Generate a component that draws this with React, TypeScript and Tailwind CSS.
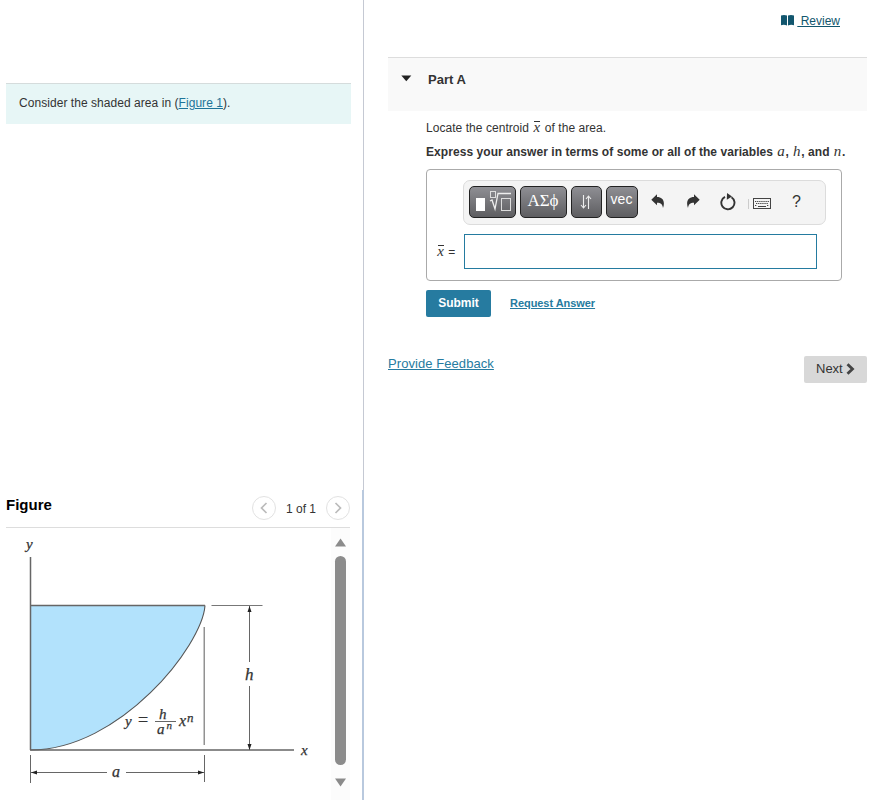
import type { ReactNode } from 'react';

function MathVar({ children }: { children: ReactNode }) {
  return (
    <span className="inline-block w-[9px] text-center font-['Liberation_Serif',serif] text-[15px] leading-none font-normal tracking-normal italic">
      {children}
    </span>
  );
}

function XBar() {
  return (
    <span className="relative inline-block">
      <MathVar>x</MathVar>
      <span className="absolute top-[2px] left-[2px] h-px w-[6px] bg-[#333]" />
    </span>
  );
}

function ToolButton({ className, children }: { className: string; children: ReactNode }) {
  return (
    <button
      className={`flex h-8 shrink-0 items-center justify-center rounded-[5px] border border-[#222] bg-linear-to-b from-[#8f8f94] to-[#5e5e61] text-white ${className}`}
    >
      {children}
    </button>
  );
}

function Toolbar() {
  return (
    <div className="ml-9 flex h-[45px] w-[363px] items-start rounded-[7px] border border-[#dcdcdc] bg-[#f4f4f4] pt-[5px] pl-[5px] text-[#333]">
      <ToolButton className="w-[47px]">
        <svg width="36" height="22" viewBox="0 0 36 22" fill="none">
          <rect x="1" y="7" width="9" height="13" fill="#fff" />
          <rect x="15.500" y="0.500" width="5" height="6" stroke="#ddd" />
          <path d="M15 10l2-1 3 9 3-15.500h13" stroke="#eee" strokeWidth="1.300" />
          <rect x="26.500" y="7.500" width="9" height="12" stroke="#ddd" />
        </svg>
      </ToolButton>
      <ToolButton className="ml-1 w-[47px] pr-px pb-[3px] font-['Liberation_Serif',serif] text-[17px]">
        ΑΣϕ
      </ToolButton>
      <ToolButton className="ml-1 w-[31px] pr-px">
        <svg width="12" height="14" viewBox="0 0 12 14" fill="none" stroke="#eee" strokeWidth="1.100">
          <path d="M3.500 0v13M1 10l2.500 3L6 10M8.500 14V1M6 4l2.500-3L11 4" />
        </svg>
      </ToolButton>
      <ToolButton className="ml-1 w-8 pr-px pb-[5px] text-[14px]">vec</ToolButton>
      <svg className="mt-2 ml-[13px]" width="14" height="15" viewBox="0 0 14 15" fill="#333">
        <path d="M0.300 5.700L6 0.300V3C11.500 3 14.500 7 12 14C11.500 10.500 10 8.700 6 8.700V11.300Z" />
      </svg>
      <svg className="mt-2 ml-[21px]" width="14" height="15" viewBox="0 0 14 15" fill="#333">
        <path d="M13.700 5.700L8 0.300V3C2.500 3-0.500 7 2 14C2.500 10.500 4 8.700 8 8.700V11.300Z" />
      </svg>
      <svg className="mt-[7px] ml-[20px]" width="16" height="18" viewBox="0 0 16 18" fill="none">
        <path d="M5 3.800A6.600 6.600 0 1 0 11.500 4.200" stroke="#333" strokeWidth="1.900" />
        <path d="M7 0l5 3.600L6.800 6.800z" fill="#333" />
      </svg>
      <svg className="mt-[11px] ml-[12px]" width="24" height="14" viewBox="0 0 24 14" fill="none">
        <path d="M0.500 2v10" stroke="#ccc" />
        <rect x="5.500" y="1.500" width="17" height="10" stroke="#444" />
        <path d="M7 4.500h14M8 6.500h12M7 8.500h2M19 8.500h2" stroke="#444" strokeDasharray="1.300 0.800" />
        <path d="M10 9.500h8" stroke="#444" />
      </svg>
      <span className="mt-[6px] ml-[20px] text-[16px] leading-5">?</span>
    </div>
  );
}

function FigureDrawing() {
  return (
    <svg
      width="325"
      height="272"
      viewBox="6 528 325 272"
      fill="none"
      stroke="#666"
      strokeWidth="1.500"
      className="font-['Liberation_Serif',serif] text-[15px] italic"
    >
      <path d="M30.500 605.500H205C202 646 120 750 30.500 750Z" fill="#b2e2fc" stroke="none" />
      <path d="M205 605.500C202 646 120 750 30.500 750" strokeWidth="1.100" stroke="#555" />
      <path d="M30.500 557V750M30 605.500H205M30 750H294" />
      <path d="M211.500 605.500H262.500M204.200 627V745" strokeWidth="1.200" stroke="#777" />
      <path d="M249.500 606V662M249.500 686V750M30.500 755V783M204.500 755V782M31 772.500H107M126 772.500H204" strokeWidth="1" />
      <path
        d="M249.500 606l-2 6h4zM249.500 750l-2-6h4zM31 772.500l6-2v4zM204 772.500l-6-2v4z"
        fill="#222"
        stroke="none"
      />
      <path d="M155 721.500H176" strokeWidth="1" />
      <g fill="#333" stroke="#333" strokeWidth="0.250">
        <text x="26" y="549">y</text>
        <text x="301" y="755">x</text>
        <text x="245" y="680" fontSize="17">h</text>
        <text x="112" y="777" fontSize="16">a</text>
        <text x="125" y="726">y</text>
        <text x="138" y="726" fontSize="18" fontStyle="normal">=</text>
        <text x="159" y="719">h</text>
        <text x="157" y="734">a</text>
        <text x="166.500" y="729" fontSize="11">n</text>
        <text x="179" y="726" fontSize="16">x</text>
        <text x="187" y="722" fontSize="13">n</text>
      </g>
    </svg>
  );
}

function PagerButton({ path }: { path: string }) {
  return (
    <button className="flex h-6 w-6 items-center justify-center rounded-full border border-[#e2e2e2]">
      <svg width="8" height="12" viewBox="0 0 8 12" fill="none" stroke="#bbb" strokeWidth="1.700">
        <path d={path} />
      </svg>
    </button>
  );
}

function LeftPanel() {
  return (
    <div className="flex w-[364px] shrink-0">
      <div className="flex grow flex-col pt-[83px] pl-[6px]">
        <div className="h-[41px] w-[345px] border-t border-[#d5dcdc] bg-[#e7f6f6] pt-[10px] pl-[13px] leading-[18px] tracking-[0.05px]">
          Consider the shaded area in (<a className="text-[#1e7499] underline">Figure 1</a>).
        </div>
        <div className="mt-[366px] flex h-[38px] w-[344px] items-start border-b border-[#ddd] text-black">
          <h2 className="grow text-[15px] leading-[30px] font-bold">Figure</h2>
          <div className="flex items-center pt-[6px] text-[#333]">
            <PagerButton path="M6.500 1L1.500 6l5 5" />
            <span className="w-[50px] pt-[2px] text-center">1 of 1</span>
            <PagerButton path="M1.500 1l5 5-5 5" />
          </div>
        </div>
        <div className="flex">
          <FigureDrawing />
          <div className="flex h-[272px] w-[19px] flex-col items-center bg-[#fcfcfc]">
            <svg className="mt-[10px]" width="12" height="9" viewBox="0 0 12 9" fill="#8b8b8b">
              <path d="M5.500 0.500L11 8.500H0z" />
            </svg>
            <div className="mt-[9px] h-[209px] w-[11px] rounded-full bg-[#8b8b8b]" />
            <svg className="mt-[13px]" width="12" height="9" viewBox="0 0 12 9" fill="#8b8b8b">
              <path d="M5.500 8.500L11 0.500H0z" />
            </svg>
          </div>
        </div>
      </div>
      <div className="flex w-[2px] flex-col items-end">
        <div className="h-[490px] w-px bg-[#c5c9d3]" />
        <div className="w-[2px] grow bg-[#b9c9de]" />
      </div>
    </div>
  );
}

function RightPanel() {
  return (
    <div className="flex grow flex-col pr-[5px] pl-6">
      <div className="flex h-[57px] justify-end pt-3 pr-[27px] text-[#12566e]">
        <svg className="mt-[3px]" width="13" height="11" viewBox="0 0 13 11" fill="#12566e">
          <path d="M0 0.500Q3 -0.300 6 0.500V10.500Q3 9 0 10.200zM7 0.500Q10 -0.300 13 0.500V10.200Q10 9 7 10.500z" />
        </svg>
        <a className="ml-[3px] leading-[18px] whitespace-pre underline"> Review</a>
      </div>
      <div className="flex h-[54px] items-start border-t border-[#ddd] bg-[#f9f9f9] pt-[13px]">
        <svg className="mt-[4px] ml-[13px]" width="11" height="7" viewBox="0 0 11 7" fill="#222">
          <path d="M0.300 0.500h10L5.300 6.200z" />
        </svg>
        <h3 className="ml-4 text-[13px] leading-[18px] font-bold">Part A</h3>
      </div>
      <div className="pl-[38px]">
        <p className="mt-[8px] h-[18px] leading-[18px] tracking-[0.05px]">
          Locate the centroid <XBar /> of the area.
        </p>
        <p className="mt-[6px] h-[18px] leading-[18px] font-bold tracking-[0.06px] whitespace-nowrap">
          Express your answer in terms of some or all of the variables <MathVar>a</MathVar>,{' '}
          <MathVar>h</MathVar>, and <MathVar>n</MathVar>.
        </p>
        <div className="mt-[8px] h-[112px] w-[416px] rounded-[4px] border border-[#aaa] pt-[10px]">
          <Toolbar />
          <div className="mt-[9px] flex items-center">
            <span className="w-[37px] pl-[9px] whitespace-nowrap">
              <XBar /> =
            </span>
            <input className="h-[35px] w-[353px] border border-[#247ba0] bg-white outline-none" />
          </div>
        </div>
        <div className="mt-[9px] flex h-[27px]">
          <button className="h-[27px] w-[65px] rounded-[2px] bg-[#267ba0] pb-[2px] font-bold text-white">
            Submit
          </button>
          <a className="ml-[19px] text-[11px] leading-[27px] font-bold tracking-[-0.05px] text-[#267ba0] underline">
            Request Answer
          </a>
        </div>
      </div>
      <div className="mt-[36px] flex items-start justify-between text-[13px]">
        <a className="pt-px leading-[20px] tracking-[0.07px] text-[#267ba0] underline">Provide Feedback</a>
        <button className="mt-[3px] flex h-[27px] w-[63px] items-center rounded-[2px] bg-[#d8d8d8] pb-[2px] pl-3">
          Next
          <svg className="ml-[3px]" width="9" height="12" viewBox="0 0 9 12" fill="none" stroke="#444" strokeWidth="2.800">
            <path d="M1.500 1.200L6.500 6l-5 4.800" />
          </svg>
        </button>
      </div>
    </div>
  );
}

export default function App() {
  return (
    <div className="flex h-[800px] w-[872px] overflow-hidden bg-white font-['Liberation_Sans',Arial,sans-serif] text-[12px] text-[#333]">
      <LeftPanel />
      <RightPanel />
    </div>
  );
}
